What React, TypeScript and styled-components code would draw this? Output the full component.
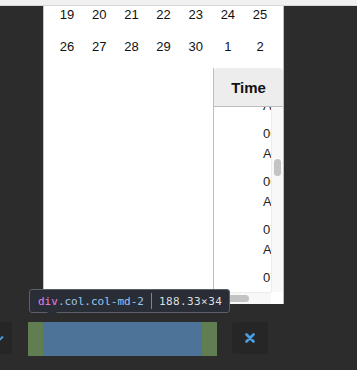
import React, { useLayoutEffect, useRef } from 'react';
import styled, { createGlobalStyle } from 'styled-components';

const GlobalStyle = createGlobalStyle`
  html, body {
    margin: 0;
    padding: 0;
    background: #2c2c2c;
    overflow: hidden;
  }
  body {
    font-family: "Liberation Sans", Arial, sans-serif;
  }
`;

const Page = styled.div`
  position: relative;
  width: 357px;
  height: 370px;
  display: flex;
  flex-direction: column;
  overflow: hidden;
`;

const TopStrip = styled.div`
  height: 5px;
  background: #f0f0f0;
  border-bottom: 1px solid #d8d8d8;
  position: relative;
  z-index: 1;
`;

const Panel = styled.div`
  margin-left: 43px;
  width: 239px;
  height: 298px;
  background: #ffffff;
  border-left: 1px solid #c6c6c6;
  border-right: 1px solid #bdbdbd;
  display: flex;
  flex-direction: column;
  overflow: hidden;
`;

const CalendarGrid = styled.div`
  margin-top: -8px;
  padding-left: 7px;
  display: grid;
  grid-template-columns: repeat(7, 32.17px);
  grid-auto-rows: 32px;
`;

const DayCell = styled.div`
  display: flex;
  align-items: center;
  justify-content: center;
  font-size: 13px;
  color: #111;
`;

const TimeSection = styled.div`
  margin-top: 6px;
  flex: 1;
  display: flex;
  justify-content: flex-end;
  min-height: 0;
`;

const TimeColumn = styled.div`
  width: 69px;
  border-left: 1px solid #bdbdbd;
  display: flex;
  flex-direction: column;
`;

const TimeHeader = styled.div`
  height: 38px;
  background: #ededed;
  border-bottom: 1px solid #bdbdbd;
  border-radius: 4px 4px 0 0;
  display: flex;
  align-items: center;
  justify-content: center;
  font-size: 15px;
  font-weight: 700;
  color: #111;
  flex-shrink: 0;
`;

const ScrollArea = styled.div`
  flex: 1;
  min-height: 0;
  display: grid;
  grid-template-columns: 57px 12px;
  grid-template-rows: 185px 12px;
`;

const Viewport = styled.div`
  overflow: hidden;
`;

const TimeInner = styled.div`
  width: 95px;
`;

const TimeItem = styled.div`
  box-sizing: border-box;
  height: 48px;
  padding: 4px 0 4px 49px;
  font-size: 13px;
  line-height: 20px;
  color: #222;
`;

const VTrack = styled.div`
  box-sizing: border-box;
  background: #f8f8f8;
  border-left: 1px solid #ececec;
  padding: 0 2px 0 2px;
  display: flex;
  flex-direction: column;
`;

const HTrack = styled.div`
  box-sizing: border-box;
  background: #f8f8f8;
  border-top: 1px solid #ececec;
  padding: 2px 0 2px 0;
  display: flex;
`;

const Thumb = styled.div`
  background: #c3c3c3;
  border-radius: 4px;
  flex-shrink: 0;
`;

const Corner = styled.div`
  background: #ffffff;
`;

const BottomBar = styled.div`
  margin-top: 18px;
  height: 34px;
  display: flex;
  align-items: flex-start;
`;

const ToolButton = styled.div<{ $w: number }>`
  width: ${(p) => p.$w}px;
  height: 32px;
  border-radius: 4px;
  background: #262626;
  display: flex;
  align-items: center;
  justify-content: center;
  color: #4a9fe3;
  flex-shrink: 0;
`;

const SelectButton = styled(ToolButton)`
  margin-left: -20px;
  justify-content: flex-end;
  padding-right: 8px;
  box-sizing: border-box;
`;

const Highlight = styled.div`
  margin-left: 16px;
  margin-right: 15px;
  width: 159px;
  height: 34px;
  border-left: 15px solid #617e53;
  border-right: 15px solid #617e53;
  background: #4e7399;
  flex-shrink: 0;
`;

const Tooltip = styled.div`
  position: absolute;
  left: 29px;
  top: 289px;
  box-sizing: border-box;
  width: 201px;
  height: 24px;
  padding: 0 8px;
  background: #292d36;
  border: 1px solid #5b5f68;
  border-radius: 3px;
  display: flex;
  align-items: center;
  font-family: "DejaVu Sans Mono", "Liberation Mono", monospace;
  font-size: 11px;
  white-space: nowrap;
  z-index: 2;

  &::after {
    content: '';
    position: absolute;
    left: 17px;
    bottom: -5px;
    width: 0;
    height: 0;
    border-left: 5px solid transparent;
    border-right: 5px solid transparent;
    border-top: 5px solid #292d36;
  }
`;

const TagName = styled.span`
  color: #e97ee3;
`;

const ClassName = styled.span`
  color: #9cc6ee;
`;

const Separator = styled.span`
  flex-shrink: 0;
  width: 1px;
  height: 16px;
  background: #80848c;
  margin: 0 7px;
`;

const Dims = styled.span`
  color: #dedede;
  letter-spacing: 0.4px;
`;

const weeks = [
  [19, 20, 21, 22, 23, 24, 25],
  [26, 27, 28, 29, 30, 1, 2],
];

const pad = (n: number) => (n < 10 ? `0${n}` : `${n}`);

const times = Array.from({ length: 42 }, (_, i) => {
  const h24 = Math.floor(i / 2);
  const h = h24 % 12 === 0 ? 12 : h24 % 12;
  const m = i % 2 === 0 ? '00' : '30';
  return `${pad(h)}:${m} ${h24 < 12 ? 'AM' : 'PM'}`;
});

const SCROLL_TOP = 563;
const VIEW_H = 185;
const VIEW_W = 57;
const CONTENT_H = times.length * 48;
const CONTENT_W = 95;
const vThumbH = (VIEW_H * VIEW_H) / CONTENT_H;
const vThumbTop = (SCROLL_TOP / CONTENT_H) * VIEW_H;
const hThumbW = (VIEW_W * VIEW_W) / CONTENT_W;

const ChevronDown = () => (
  <svg width="8" height="6" viewBox="0 0 8 6">
    <path d="M1 1.5 L4 4.5 L7 1.5" fill="none" stroke="currentColor" strokeWidth="1.8" />
  </svg>
);

const CloseIcon = () => (
  <svg width="10" height="10" viewBox="0 0 10 10">
    <path d="M1.5 1.5 L8.5 8.5 M8.5 1.5 L1.5 8.5" stroke="currentColor" strokeWidth="2.6" strokeLinecap="round" />
  </svg>
);

export default function App() {
  const viewRef = useRef<HTMLDivElement>(null);

  useLayoutEffect(() => {
    if (viewRef.current) {
      viewRef.current.scrollTop = SCROLL_TOP;
      viewRef.current.scrollLeft = 0;
    }
  }, []);

  return (
    <Page>
      <GlobalStyle />
      <TopStrip />
      <Panel>
        <CalendarGrid>
          {weeks.flat().map((d, i) => (
            <DayCell key={i}>{d}</DayCell>
          ))}
        </CalendarGrid>
        <TimeSection>
          <TimeColumn>
            <TimeHeader>Time</TimeHeader>
            <ScrollArea>
              <Viewport ref={viewRef}>
                <TimeInner>
                  {times.map((t) => (
                    <TimeItem key={t}>{t}</TimeItem>
                  ))}
                </TimeInner>
              </Viewport>
              <VTrack>
                <Thumb style={{ marginTop: vThumbTop, height: vThumbH }} />
              </VTrack>
              <HTrack>
                <Thumb style={{ marginLeft: 1, width: hThumbW }} />
              </HTrack>
              <Corner />
            </ScrollArea>
          </TimeColumn>
        </TimeSection>
      </Panel>
      <BottomBar>
        <SelectButton $w={32}>
          <ChevronDown />
        </SelectButton>
        <Highlight />
        <ToolButton $w={36}>
          <CloseIcon />
        </ToolButton>
      </BottomBar>
      <Tooltip>
        <TagName>div</TagName>
        <ClassName>.col.col-md-2</ClassName>
        <Separator />
        <Dims>188.33×34</Dims>
      </Tooltip>
    </Page>
  );
}
